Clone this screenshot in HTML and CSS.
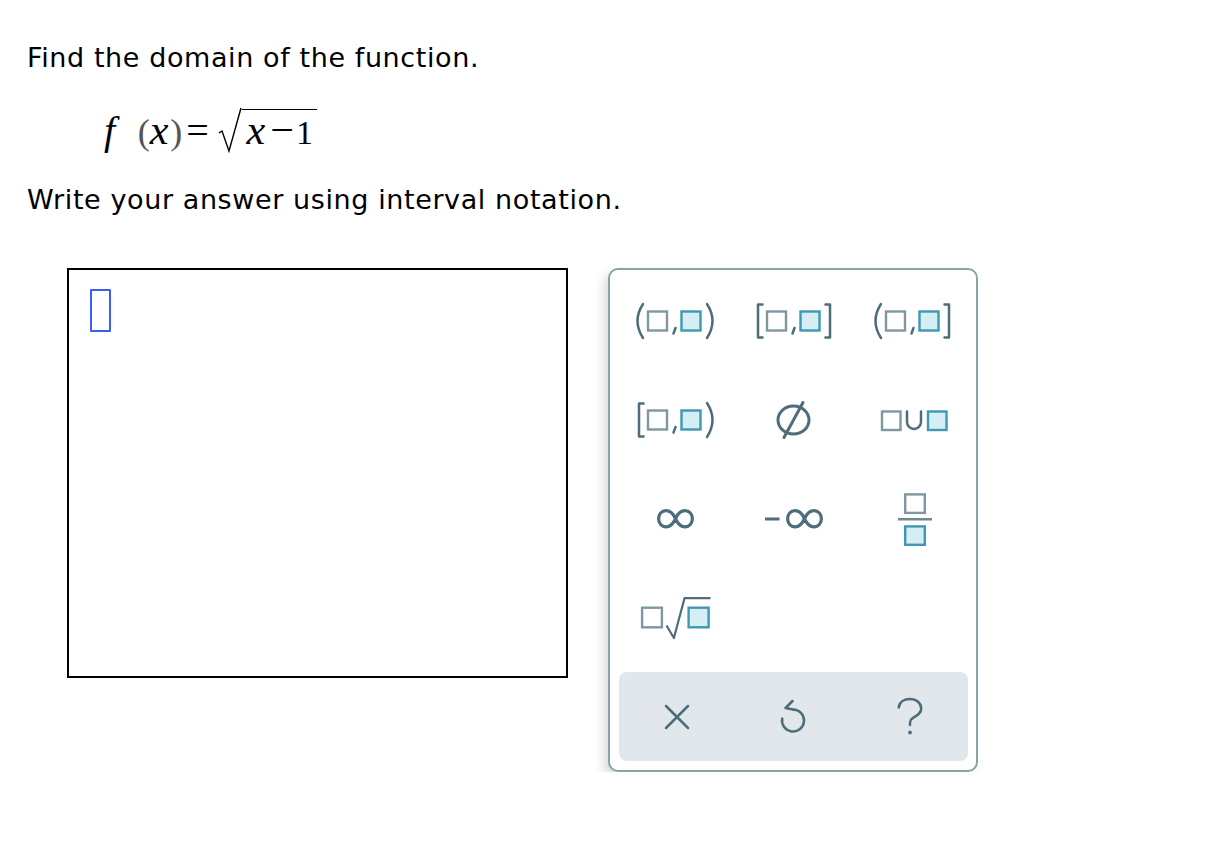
FILE: index.html
```html
<!DOCTYPE html>
<html lang="en">
<head>
  <meta charset="UTF-8" />
  <title>Find the domain</title>
  <link rel="stylesheet" href="styles.css">
</head>
<body>

<div class="page">
  <p class="prompt">Find the domain of the function.</p>

  <!-- f(x) = sqrt(x - 1) -->
  <div class="formula"><span class="fn">f</span><span class="paren open">(</span><span class="var">x</span><span class="paren close">)</span><span class="eq">=</span><svg class="radical" width="24" height="46" viewBox="0 0 24 46"><path d="M1 26 L4 24 L11 44 L23 1"/></svg><span class="radicand"><span class="var">x</span><span class="op">−</span><span class="num">1</span></span></div>

  <p class="prompt second">Write your answer using interval notation.</p>

  <div class="work">
    <div class="answer"><span class="cursor"></span></div>

    <div class="palette">
      <div class="keys">
        <!-- (a,b) -->
        <div class="key">
          <svg width="90" height="60" viewBox="0 0 90 60">
            <path class="ink" d="M13 13 Q2 30 13 47"/>
            <rect class="slot" x="18" y="20.5" width="19" height="19"/>
            <path class="ink" d="M45.5 37 L43.5 42.5"/>
            <rect class="slot on" x="51.5" y="20.5" width="19" height="19"/>
            <path class="ink" d="M77 13 Q88 30 77 47"/>
          </svg>
        </div>
        <!-- [a,b] -->
        <div class="key">
          <svg width="90" height="60" viewBox="0 0 90 60">
            <path class="ink" d="M13.5 13.5 H9 V46.5 H13.5"/>
            <rect class="slot" x="18" y="20.5" width="19" height="19"/>
            <path class="ink" d="M45.5 37 L43.5 42.5"/>
            <rect class="slot on" x="51.5" y="20.5" width="19" height="19"/>
            <path class="ink" d="M76.5 13.5 H81 V46.5 H76.5"/>
          </svg>
        </div>
        <!-- (a,b] -->
        <div class="key">
          <svg width="90" height="60" viewBox="0 0 90 60">
            <path class="ink" d="M13 13 Q2 30 13 47"/>
            <rect class="slot" x="18" y="20.5" width="19" height="19"/>
            <path class="ink" d="M45.5 37 L43.5 42.5"/>
            <rect class="slot on" x="51.5" y="20.5" width="19" height="19"/>
            <path class="ink" d="M76.5 13.5 H81 V46.5 H76.5"/>
          </svg>
        </div>

        <!-- [a,b) -->
        <div class="key">
          <svg width="90" height="60" viewBox="0 0 90 60">
            <path class="ink" d="M13.5 13.5 H9 V46.5 H13.5"/>
            <rect class="slot" x="18" y="20.5" width="19" height="19"/>
            <path class="ink" d="M45.5 37 L43.5 42.5"/>
            <rect class="slot on" x="51.5" y="20.5" width="19" height="19"/>
            <path class="ink" d="M77 13 Q88 30 77 47"/>
          </svg>
        </div>
        <!-- empty set -->
        <div class="key">
          <svg width="90" height="60" viewBox="0 0 90 60">
            <ellipse class="ink thick" cx="44.5" cy="30" rx="15.5" ry="14"/>
            <path class="ink thick" d="M54 12.5 L35 47.5"/>
          </svg>
        </div>
        <!-- union -->
        <div class="key">
          <svg width="90" height="60" viewBox="0 0 90 60">
            <rect class="slot" x="14" y="21.5" width="18.5" height="18.5"/>
            <path class="ink" d="M39 21.5 V32 A7 7 0 0 0 53 32 V21.5"/>
            <rect class="slot on" x="60" y="21.5" width="18.5" height="18.5"/>
          </svg>
        </div>

        <!-- infinity -->
        <div class="key">
          <svg width="90" height="60" viewBox="0 0 90 60">
            <path class="ink inf" d="M45.5 29.75 C48 24, 52 21.7, 55 21.7 C59.5 21.7, 62.4 25.3, 62.4 29.75 C62.4 34.2, 59.5 37.8, 55 37.8 C52 37.8, 48 35.5, 45.5 29.75 C43 24, 39 21.7, 36 21.7 C31.5 21.7, 28.6 25.3, 28.6 29.75 C28.6 34.2, 31.5 37.8, 36 37.8 C39 37.8, 43 35.5, 45.5 29.75 Z"/>
          </svg>
        </div>
        <!-- minus infinity -->
        <div class="key">
          <svg width="90" height="60" viewBox="0 0 90 60">
            <path class="ink bar" d="M16 30 H30.5"/>
            <path class="ink inf" d="M55.5 29.75 C58 24, 62 21.7, 65 21.7 C69.5 21.7, 72.4 25.3, 72.4 29.75 C72.4 34.2, 69.5 37.8, 65 37.8 C62 37.8, 58 35.5, 55.5 29.75 C53 24, 49 21.7, 46 21.7 C41.5 21.7, 38.6 25.3, 38.6 29.75 C38.6 34.2, 41.5 37.8, 46 37.8 C49 37.8, 53 35.5, 55.5 29.75 Z"/>
          </svg>
        </div>
        <!-- fraction -->
        <div class="key">
          <svg width="90" height="60" viewBox="0 0 90 60">
            <rect class="slot" x="37.2" y="5.4" width="19.6" height="18.5"/>
            <path class="ink rule" d="M30 30.3 H64"/>
            <rect class="slot on" x="37.2" y="37.4" width="19.6" height="18.4"/>
          </svg>
        </div>

        <!-- nth root -->
        <div class="key">
          <svg width="90" height="60" viewBox="0 0 90 60">
            <rect class="slot" x="12.1" y="19.7" width="19.8" height="19.6"/>
            <path class="ink root" d="M36.5 37.5 L43.9 50 L54.5 10.2 H80.5"/>
            <rect class="slot on" x="58.6" y="19.7" width="20" height="19.6"/>
          </svg>
        </div>
      </div>

      <div class="tools">
        <!-- clear -->
        <div class="tool">
          <svg width="40" height="40" viewBox="0 0 40 40">
            <path class="ink" d="M9 9 L31 31 M31 9 L9 31"/>
          </svg>
        </div>
        <!-- undo -->
        <div class="tool">
          <svg width="40" height="40" viewBox="0 0 40 40">
            <path class="ink" d="M20 12.5 A11 11 0 1 1 9.2 21.5"/>
            <path class="ink" d="M19.5 4 L12.5 11 L20 12.5"/>
          </svg>
        </div>
        <!-- help -->
        <div class="tool">
          <svg width="40" height="40" viewBox="0 0 40 40">
            <path class="ink" d="M8.7 10.5 C9.5 4.5, 14.5 2, 20 2 C26.5 2, 31.2 6, 31.2 11.5 C31.2 16.5, 27 18.5, 23.5 20.5 C21 22, 20 23.5, 20 26.5 V28"/>
            <circle class="dot" cx="20" cy="35.5" r="1.9"/>
          </svg>
        </div>
      </div>
    </div>
  </div>
</div>

</body>
</html>
```

FILE: styles.css
```css
body {
  margin: 0;
  font-family: "DejaVu Sans", Verdana, sans-serif;
  color: #000;
  background: #fff;
}

.page {
  padding: 42px 0 0 27px;
}

.prompt {
  margin: 0;
  font-size: 27px;
  line-height: 31px;
  letter-spacing: 0.6px;
}

.prompt.second {
  margin-top: 31px;
}

/* formula */
.formula {
  height: 46px;
  margin: 34px 0 0 77px;
  font-family: "Liberation Serif", "Times New Roman", serif;
  font-size: 34px;
  line-height: 40px;
  white-space: nowrap;
}

.fn {
  font-style: italic;
  font-size: 40px;
}

.var {
  font-style: italic;
  font-size: 42px;
}

.paren {
  color: #555;
  font-size: 36px;
}

.paren.open {
  margin-left: 22.5px;
}

.paren.close {
  margin-left: 2px;
}

.eq {
  font-size: 40px;
  margin-left: 4px;
}

.radical {
  vertical-align: -9px;
  margin-left: 9px;
}

.radical path {
  fill: none;
  stroke: #000;
  stroke-width: 1.4;
}

.radicand {
  display: inline-block;
  border-top: 1.5px solid #000;
  padding: 0 4px 0 4.7px;
}

.op {
  font-size: 42px;
  margin-left: 5px;
}

.num {
  margin-left: 2px;
}

/* answer area */
.work {
  display: flex;
  align-items: flex-start;
  gap: 40px;
  margin: 53px 0 0 40px;
}

.answer {
  width: 497px;
  height: 406px;
  border: 2px solid #000;
}

.cursor {
  display: block;
  width: 17px;
  height: 39px;
  margin: 19px 0 0 21px;
  border: 2px solid #3d5ef5;
  border-radius: 1px;
}

/* keypad */
.palette {
  width: 366px;
  padding: 1px 0 9px;
  border: 2px solid #8da1a9;
  border-radius: 10px;
  background: #fff;
  box-shadow: -5px 5px 10px rgba(0, 0, 0, 0.13);
}

.keys {
  display: grid;
  grid-template-columns: repeat(3, 119px);
  grid-auto-rows: 99px;
  padding-left: 5px;
}

.key,
.tool {
  display: flex;
  align-items: center;
  justify-content: center;
}

.tools {
  display: grid;
  grid-template-columns: repeat(3, 1fr);
  height: 89px;
  margin: 5px 8px 0 9px;
  background: #e1e7ea;
  border-radius: 8px;
}

.ink {
  fill: none;
  stroke: #4d6d7a;
  stroke-width: 2.5;
  stroke-linecap: round;
  stroke-linejoin: round;
}

.ink.thick {
  stroke-width: 3;
}

.ink.inf {
  stroke-width: 3.2;
}

.ink.bar {
  stroke-width: 3;
  stroke-linecap: butt;
}

.ink.rule {
  stroke-width: 2.4;
  stroke: #6f8a95;
  stroke-linecap: butt;
}

.ink.root {
  stroke-width: 2.2;
  stroke-linecap: butt;
}

.slot {
  fill: #fff;
  stroke: #7f97a0;
  stroke-width: 2.4;
}

.slot.on {
  fill: #d5eef3;
  stroke: #3f98b3;
}

.dot {
  fill: #4d6d7a;
}
```
